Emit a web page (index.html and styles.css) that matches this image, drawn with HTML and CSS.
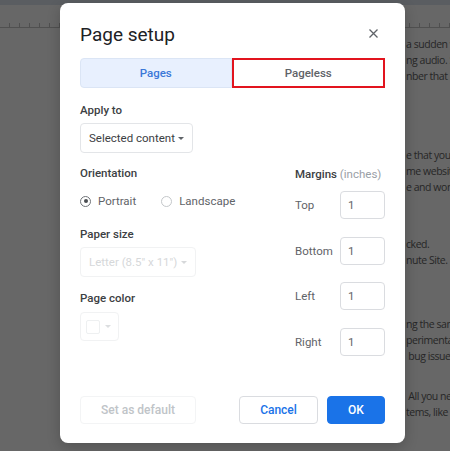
FILE: index.html
```html
<!DOCTYPE html>
<html lang="en">
<head>
    <meta charset="UTF-8">
    <meta name="viewport" content="width=device-width, initial-scale=1.0">
    <title>Page setup</title>
    <link rel="stylesheet" href="styles.css">
</head>
<body>
    <div class="doc">
        <div class="toolbar"></div>
        <div class="ruler"></div>
        <div class="page-text">
            <p class="para p1">a sudden w<br>ng audio. S<br>nber that m</p>
            <p class="para p2">e that you<br>me websit<br>e and won'</p>
            <p class="para p3">cked.<br>nute Site.</p>
            <p class="para p4">ng the sam<br>perimenta<br>&nbsp;bug issue</p>
            <p class="para p5">&nbsp;All you ne<br>tems, like</p>
        </div>
    </div>

    <div class="dialog">
        <div class="dialog-head">
            <h1 class="dialog-title">Page setup</h1>
            <button class="close-btn" aria-label="Close">
                <svg width="9" height="9" viewBox="0 0 9 9">
                    <path d="M0.5 0.5 L8.5 8.5 M8.5 0.5 L0.5 8.5" stroke="#5f6368" stroke-width="1.3" fill="none"/>
                </svg>
            </button>
        </div>

        <div class="tabs">
            <div class="tab tab-active">Pages</div>
            <div class="tab tab-marked">Pageless</div>
        </div>

        <div class="dialog-body">
            <div class="col-left">
                <div class="label">Apply to</div>
                <div class="select">
                    <span>Selected content</span>
                    <span class="caret"></span>
                </div>

                <div class="label label-orient">Orientation</div>
                <div class="radios">
                    <label class="radio"><span class="dot checked"></span>Portrait</label>
                    <label class="radio"><span class="dot"></span>Landscape</label>
                </div>

                <div class="label label-paper">Paper size</div>
                <div class="select select-disabled">
                    <span>Letter (8.5" x 11")</span>
                    <span class="caret"></span>
                </div>

                <div class="label label-color">Page color</div>
                <div class="swatch">
                    <span class="swatch-chip"></span>
                    <span class="caret"></span>
                </div>
            </div>

            <div class="col-right">
                <div class="label">Margins <span class="unit">(inches)</span></div>
                <div class="margin-rows">
                    <div class="margin-row"><span>Top</span><div class="num">1</div></div>
                    <div class="margin-row"><span>Bottom</span><div class="num">1</div></div>
                    <div class="margin-row"><span>Left</span><div class="num">1</div></div>
                    <div class="margin-row"><span>Right</span><div class="num">1</div></div>
                </div>
            </div>
        </div>

        <div class="dialog-foot">
            <button class="btn btn-default">Set as default</button>
            <div class="foot-actions">
                <button class="btn btn-cancel">Cancel</button>
                <button class="btn btn-ok">OK</button>
            </div>
        </div>
    </div>
</body>
</html>
```

FILE: styles.css
```css
body {
    margin: 0;
    height: 451px;
    overflow: hidden;
    background: #676767;
    font-family: Roboto, Arial, sans-serif;
}

/* dimmed document behind the dialog */
.doc {
    width: 100%;
}

.toolbar {
    height: 5px;
    background: #5a5d61;
}

.ruler {
    height: 22px;
    border-bottom: 1px solid #505050;
    background:
        repeating-linear-gradient(90deg, transparent 0, transparent 9px, #4f4f4f 9px, #4f4f4f 10px) bottom / 100% 4px no-repeat;
}

.page-text {
    margin-left: 406px;
    width: 44px;
    overflow: hidden;
    white-space: nowrap;
    font-family: "Open Sans", "Liberation Sans", sans-serif;
    font-size: 10.5px;
    letter-spacing: -0.45px;
    line-height: 16px;
    color: #262626;
}

.para { margin: 0; }
.p1 { margin-top: 8px; }
.p2 { margin-top: 63px; }
.p3 { margin-top: 41px; }
.p4 { margin-top: 48px; }
.p5 { margin-top: 24px; }

/* dialog */
.dialog {
    position: absolute;
    left: 60px;
    top: 3px;
    width: 345px;
    height: 440px;
    box-sizing: border-box;
    padding: 17px 20px 19px;
    background: #fff;
    border-radius: 8px;
    box-shadow: 0 4px 14px rgba(0, 0, 0, 0.2);
    display: flex;
    flex-direction: column;
}

.dialog-head {
    display: flex;
    justify-content: space-between;
    align-items: flex-start;
    height: 30px;
}

.dialog-title {
    margin: 0;
    font-size: 19px;
    font-weight: 400;
    line-height: 30px;
    color: #202124;
}

.close-btn {
    width: 24px;
    height: 24px;
    margin-top: 1px;
    padding: 0;
    border: none;
    background: none;
    display: flex;
    align-items: center;
    justify-content: center;
}

.tabs {
    display: flex;
    height: 30px;
    margin-top: 8px;
}

.tab {
    flex: 1;
    box-sizing: border-box;
    display: flex;
    align-items: center;
    justify-content: center;
    font-size: 11.5px;
    font-weight: 500;
}

.tab-active {
    background: #e8f0fe;
    border: 1px solid #dbe5f5;
    border-radius: 4px 0 0 4px;
    color: #3b78d8;
}

.tab-marked {
    border: 2px solid #e2141e;
    color: #5f6368;
}

.dialog-body {
    display: grid;
    grid-template-columns: 215px 1fr;
}

.label {
    font-size: 11.5px;
    font-weight: 500;
    line-height: 20px;
    color: #3c4043;
}

.col-left > .label:first-child { margin-top: 12px; }
.label-orient { margin-top: 10px; }
.label-paper { margin-top: 13px; }
.label-color { margin-top: 11px; }

.select {
    width: 113px;
    height: 30px;
    margin-top: 3px;
    box-sizing: border-box;
    padding: 0 8px;
    border: 1px solid #e3e5e8;
    border-radius: 4px;
    display: flex;
    align-items: center;
    justify-content: space-between;
    font-size: 11.5px;
    color: #3c4043;
}

.caret {
    width: 0;
    height: 0;
    border-left: 3px solid transparent;
    border-right: 3px solid transparent;
    border-top: 3px solid #5f6368;
}

.select-disabled {
    width: 116px;
    border-color: #f1f2f3;
    color: #d6d8da;
}

.select-disabled .caret { border-top-color: #d6d8da; }

.radios {
    display: flex;
    gap: 25px;
    margin-top: 8px;
    height: 20px;
}

.radio {
    display: flex;
    align-items: center;
    gap: 7px;
    font-size: 11.5px;
    color: #5f6368;
}

.dot {
    width: 11px;
    height: 11px;
    box-sizing: border-box;
    border: 1px solid #c4c7ca;
    border-radius: 50%;
    display: flex;
    align-items: center;
    justify-content: center;
}

.dot.checked { border: 1.5px solid #6f7378; }

.dot.checked::after {
    content: "";
    width: 4px;
    height: 4px;
    border-radius: 50%;
    background: #4a4d51;
}

.swatch {
    width: 39px;
    height: 29px;
    margin-top: 4px;
    box-sizing: border-box;
    padding: 0 7px 0 5px;
    border: 1px solid #f1f2f3;
    border-radius: 4px;
    display: flex;
    align-items: center;
    justify-content: space-between;
}

.swatch-chip {
    width: 14px;
    height: 14px;
    box-sizing: border-box;
    border: 1px solid #eef0f1;
    border-radius: 2px;
}

.swatch .caret { border-top-color: #dcdee0; }

.col-right > .label { margin-top: 76px; }

.unit {
    font-weight: 400;
    color: #9aa0a6;
}

.margin-rows {
    display: flex;
    flex-direction: column;
    gap: 17.5px;
    margin-top: 7px;
}

.margin-row {
    display: flex;
    align-items: center;
    justify-content: space-between;
    font-size: 11.5px;
    color: #5f6368;
}

.num {
    width: 45px;
    height: 28px;
    box-sizing: border-box;
    padding-left: 7px;
    border: 1px solid #dadce0;
    border-radius: 4px;
    display: flex;
    align-items: center;
    color: #5f6368;
}

.dialog-foot {
    margin-top: auto;
    display: flex;
    justify-content: space-between;
}

.foot-actions {
    display: flex;
    gap: 9px;
}

.btn {
    height: 28px;
    box-sizing: border-box;
    padding: 0;
    border-radius: 4px;
    font-family: Roboto, Arial, sans-serif;
    font-size: 12px;
    font-weight: 500;
}

.btn-default {
    width: 116px;
    background: #fff;
    border: 1px solid #f3f4f5;
    color: #c0c4c8;
}

.btn-cancel {
    width: 79px;
    background: #fff;
    border: 1px solid #dadce0;
    color: #1a73e8;
}

.btn-ok {
    width: 58px;
    background: #1a73e8;
    border: 1px solid #1a73e8;
    color: #fff;
}
```
